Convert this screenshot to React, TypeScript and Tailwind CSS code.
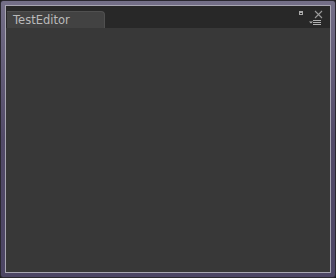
import React from "react";

export default function App() {
  return (
    <div className="w-[336px] h-[278px] bg-[#1c1c1c]">
      {/* window frame */}
      <div className="w-full h-full rounded-[3px] border border-[#2a2830] bg-gradient-to-b from-[#746f88] via-[#524a68] to-[#4c4564] p-[4px]">
        <div className="w-full h-full flex flex-col border border-[#a8a6b2] bg-[#383838]">
          {/* header */}
          <div className="h-[22px] bg-[#282828] flex items-end relative shrink-0">
            <div
              className="ml-[1px] w-[98px] h-[17px] rounded-tr-[4px] bg-[#424242] border-t border-r border-[#505050] flex items-center pl-[6px] pt-[2px] text-[11.5px] text-[#bababa]"
              style={{ fontFamily: '"DejaVu Sans", Verdana, sans-serif' }}
            >
              TestEditor
            </div>
            {/* maximize */}
            <div className="absolute left-[293px] top-[5px] w-[4px] h-[4px] border border-[#a8a8a8] border-t-2" />
            {/* close */}
            <svg className="absolute left-[308px] top-[4px]" width="9" height="9" viewBox="0 0 9 9">
              <path d="M1 1 L8 8 M8 1 L1 8" stroke="#9a9a9a" strokeWidth="1.1" />
            </svg>
            {/* menu */}
            <svg className="absolute left-[303px] top-[14px]" width="13" height="6" viewBox="0 0 13 6">
              <path d="M0 1.5 L4 1.5 L2 3.5 Z" fill="#b0b0b0" />
              <path d="M4 0.5 H12 M4 2.5 H12 M4 4.5 H12" stroke="#b0b0b0" strokeWidth="1" />
            </svg>
          </div>
          <div className="flex-1 bg-[#383838]" />
        </div>
      </div>
    </div>
  );
}
